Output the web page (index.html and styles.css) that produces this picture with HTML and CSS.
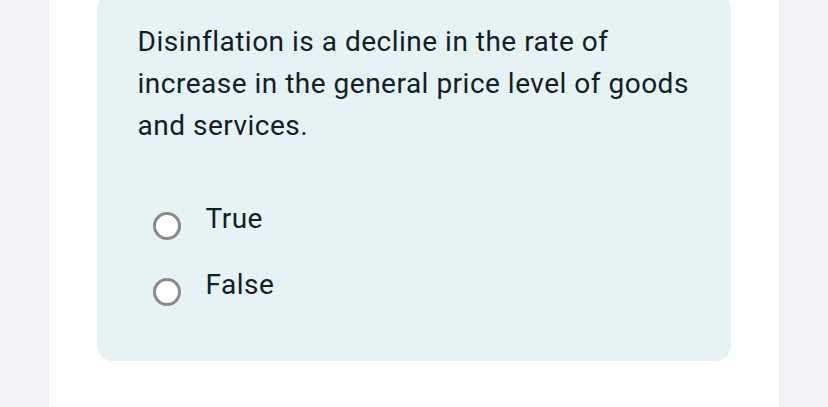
FILE: index.html
```html
<!DOCTYPE html>
<html>
<head>
<meta charset="utf-8">
<link rel="stylesheet" href="styles.css">
</head>
<body>
<div class="page">
  <div class="panel">
    <div class="card">
      <p class="question">Disinflation is a decline in the rate of increase in the general price level of goods and services.</p>
      <div class="options">
        <label class="option"><span class="radio"></span><span class="label">True</span></label>
        <label class="option"><span class="radio"></span><span class="label">False</span></label>
      </div>
    </div>
  </div>
</div>
</body>
</html>
```
FILE: styles.css
```css
html, body {
  margin: 0;
  padding: 0;
  height: 100%;
  overflow: hidden;
}
body {
  background: #f0f2f6;
  font-family: Roboto, "Liberation Sans", sans-serif;
  color: #0f2128;
}
.page {
  display: flex;
  justify-content: center;
  height: 100%;
}
.panel {
  width: 730px;
  margin-left: -1px;
  background: #ffffff;
  padding: 0 48px;
  box-sizing: border-box;
}
.card {
  margin-top: -6px;
  background: #e6f2f4;
  border-radius: 16px;
  padding: 27px 41px 34px;
  box-sizing: border-box;
  height: 367px;
}
.question {
  margin: 0;
  font-size: 28px;
  line-height: 42px;
  letter-spacing: 0.5px;
  max-width: 570px;
}
.options {
  margin-top: 65px;
  display: flex;
  flex-direction: column;
  gap: 38px;
}
.option {
  display: flex;
  align-items: center;
  height: 28px;
  padding-left: 15px;
}
.radio {
  width: 28px;
  height: 28px;
  border: 3px solid #8a8a8a;
  border-radius: 50%;
  background: #ffffff;
  box-sizing: border-box;
  flex: none;
}
.label {
  margin-left: 25px;
  font-size: 28px;
  line-height: 28px;
  letter-spacing: 0.5px;
  position: relative;
  top: -7px;
}
```
